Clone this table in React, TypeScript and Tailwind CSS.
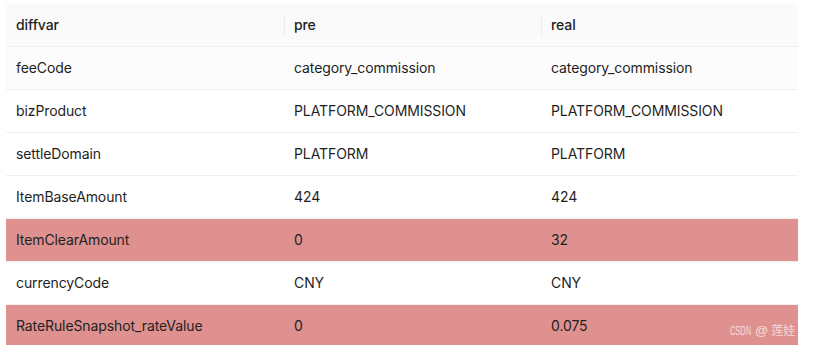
import React from "react";

const rows: { k: string; pre: string; real: string; diff?: boolean; hover?: boolean }[] = [
  { k: "feeCode", pre: "category_commission", real: "category_commission", hover: true },
  { k: "bizProduct", pre: "PLATFORM_COMMISSION", real: "PLATFORM_COMMISSION" },
  { k: "settleDomain", pre: "PLATFORM", real: "PLATFORM" },
  { k: "ItemBaseAmount", pre: "424", real: "424" },
  { k: "ItemClearAmount", pre: "0", real: "32", diff: true },
  { k: "currencyCode", pre: "CNY", real: "CNY" },
  { k: "RateRuleSnapshot_rateValue", pre: "0", real: "0.075", diff: true },
];

export default function App() {
  return (
    <div
      className="w-[813px] h-[345px] bg-white overflow-hidden relative text-[14px] tracking-[-0.1px] text-[#1f1f1f]"
      style={{ fontFamily: 'Inter, "Noto Sans", sans-serif' }}
    >
      <div className="ml-[6px] mt-[4px] w-[792px]">
        <div className="grid grid-cols-[278px_257px_257px] h-[43px] bg-[#fafafa] border-b border-[#f0f0f0] font-medium">
          <div className="flex items-center px-[10px] pb-px">diffvar</div>
          <div className="flex items-center px-[10px] pb-px relative">
            <span className="absolute left-0 top-[10px] h-[22px] w-px bg-[#ececec]" />
            pre
          </div>
          <div className="flex items-center px-[10px] pb-px relative">
            <span className="absolute left-0 top-[10px] h-[22px] w-px bg-[#ececec]" />
            real
          </div>
        </div>
        {rows.map((r) => (
          <div
            key={r.k}
            className={
              "grid grid-cols-[278px_257px_257px] h-[43px] border-b border-[#f0f0f0] " +
              (r.diff ? "bg-[#de918f]" : r.hover ? "bg-[#fcfcfc]" : "bg-white")
            }
          >
            <div className="flex items-center px-[10px] pb-[2px]">{r.k}</div>
            <div className="flex items-center px-[10px] pb-[2px]">{r.pre}</div>
            <div className="flex items-center px-[10px] pb-[2px]">{r.real}</div>
          </div>
        ))}
      </div>
      <div
        className="absolute left-[730px] top-[321px] flex items-center whitespace-nowrap text-[12px] tracking-normal text-white/65"
        style={{ fontFamily: '"Liberation Sans", "Noto Sans CJK SC", sans-serif' }}
      >
        <span className="inline-block w-[21px] overflow-visible">
          <span className="inline-block origin-left scale-x-[0.62]">CSDN</span>
        </span>
        <span className="ml-[4px] text-[13px]">@</span>
        <span className="ml-[3px]">莲娃</span>
      </div>
    </div>
  );
}
